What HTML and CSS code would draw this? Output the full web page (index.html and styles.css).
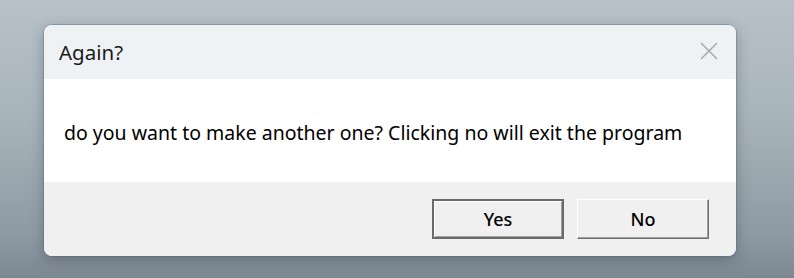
FILE: index.html
```html
<!DOCTYPE html>
<html>
<head>
<meta charset="utf-8">
<link rel="stylesheet" href="styles.css">
</head>
<body>
<div class="desk">
  <div class="dialog">
    <div class="titlebar">
      <span class="title">Again?</span>
      <svg class="close" width="18" height="18" viewBox="0 0 18 18"><path d="M1 1 L17 17 M17 1 L1 17" stroke="#a2a2a2" stroke-width="1.3" fill="none"/></svg>
    </div>
    <div class="content">
      <p class="msg">do you want to make another one? Clicking no will exit the program</p>
    </div>
    <div class="footer">
      <button class="btn btn-default">Yes</button>
      <button class="btn">No</button>
    </div>
  </div>
</div>
</body>
</html>
```
FILE: styles.css
```css
html, body {
  margin: 0;
  padding: 0;
}
body {
  width: 794px;
  height: 278px;
  overflow: hidden;
  background: linear-gradient(180deg, #b7c1c9 0%, #a9b5bd 40%, #8e9aa3 85%, #7c8891 100%);
  font-family: "Noto Sans", "Open Sans", sans-serif;
}
.desk {
  padding: 25px 0 0 44px;
}
.dialog {
  width: 692px;
  height: 231px;
  border-radius: 8px;
  overflow: hidden;
  display: flex;
  flex-direction: column;
  box-shadow: 0 0 0 1px rgba(90,100,110,0.35), 0 4px 14px rgba(40,50,60,0.35);
  background: #f0f0f0;
}
.titlebar {
  height: 54px;
  background: #eef2f5;
  display: flex;
  align-items: center;
  justify-content: space-between;
  padding: 0 18px 0 15px;
}
.title {
  font-size: 20.5px;
  color: #1a1a1a;
  margin-top: -1px;
}
.close {
  display: block;
  margin-top: -2px;
}
.content {
  height: 103px;
  background: #ffffff;
  display: flex;
  align-items: center;
  padding-left: 20px;
}
.msg {
  margin: 0;
  font-size: 19.5px;
  color: #000;
  margin-top: 4px;
  white-space: nowrap;
}
.footer {
  flex: 1;
  background: #f0f0f0;
  display: flex;
  justify-content: flex-end;
  align-items: flex-start;
  gap: 13px;
  padding: 17px 27px 0 0;
}
.btn {
  width: 132px;
  height: 40px;
  font-family: "Noto Sans", "Open Sans", sans-serif;
  font-size: 18px;
  font-weight: 500;
  color: #000;
  background: #f0f0f0;
  border: 1px solid;
  border-color: #ffffff #6d6d6d #6d6d6d #ffffff;
  box-shadow: inset -1px -1px 0 #a0a0a0;
  padding: 0;
}
.btn-default {
  border: 2px solid #6a6a6a;
  box-shadow: inset 1px 1px 0 #ffffff, inset -1px -1px 0 #a0a0a0;
}
```
